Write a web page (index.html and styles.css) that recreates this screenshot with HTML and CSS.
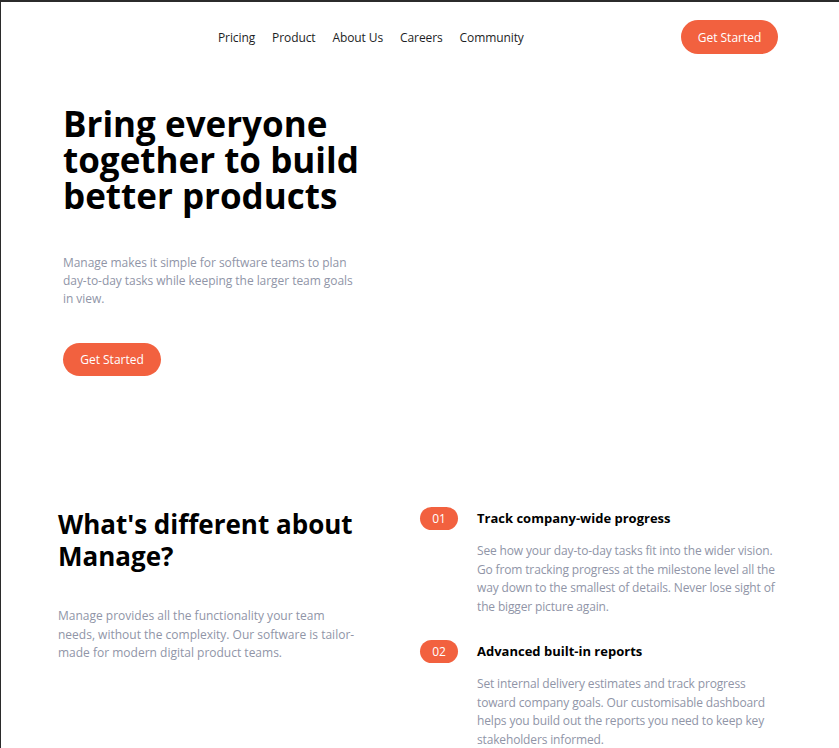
FILE: index.html
```html
<!DOCTYPE html>
<html lang="en">
<head>
<meta charset="utf-8">
<title>Manage</title>
<link rel="stylesheet" href="styles.css">
</head>
<body>
<div class="page">
  <header class="header">
    <nav class="nav">
      <a href="#">Pricing</a>
      <a href="#">Product</a>
      <a href="#">About Us</a>
      <a href="#">Careers</a>
      <a href="#">Community</a>
    </nav>
    <a class="btn btn-nav" href="#">Get Started</a>
  </header>

  <section class="hero">
    <h1>Bring everyone together to build better products</h1>
    <p class="hero-text">Manage makes it simple for software teams to plan day-to-day tasks while keeping the larger team goals in view.</p>
    <a class="btn btn-hero" href="#">Get Started</a>
  </section>

  <section class="diff">
    <div class="diff-intro">
      <h2>What's different about Manage?</h2>
      <p class="muted">Manage provides all the functionality your team needs, without the complexity. Our software is tailor-made for modern digital product teams.</p>
    </div>
    <ol class="features">
      <li class="feature">
        <span class="badge">01</span>
        <div class="feature-body">
          <h3>Track company-wide progress</h3>
          <p class="muted">See how your day-to-day tasks fit into the wider vision. Go from tracking progress at the milestone level all the way down to the smallest of details. Never lose sight of the bigger picture again.</p>
        </div>
      </li>
      <li class="feature">
        <span class="badge">02</span>
        <div class="feature-body">
          <h3>Advanced built-in reports</h3>
          <p class="muted">Set internal delivery estimates and track progress toward company goals. Our customisable dashboard helps you build out the reports you need to keep key stakeholders informed.</p>
        </div>
      </li>
    </ol>
  </section>
</div>
</body>
</html>
```

FILE: styles.css
```css
* { box-sizing: border-box; }
html, body { margin: 0; padding: 0; }
body {
  font-family: "Open Sans", "Noto Sans", sans-serif;
  font-size: 12px;
  color: #000;
  background: #fff;
  border-top: 2px solid #2b2b2b;
  border-left: 1px solid #2b2b2b;
  min-height: 748px;
  overflow: hidden;
}
.page { width: 838px; }

.header {
  display: flex;
  align-items: center;
  padding: 18px 61px 0 217px;
  height: 52px;
}
.nav {
  display: flex;
  gap: 17px;
  flex: 1;
}
.nav a {
  color: #1d1e25;
  text-decoration: none;
  font-size: 12px;
  letter-spacing: -0.1px;
}

.btn {
  display: inline-flex;
  align-items: center;
  justify-content: center;
  background: #f2613f;
  color: #fff;
  text-decoration: none;
  font-size: 12px;
  border-radius: 999px;
  height: 34px;
}
.btn-nav { width: 97px; }
.btn-hero { width: 98px; height: 33px; }

.hero {
  padding: 52px 0 0 62px;
  width: 440px;
}
.hero h1 {
  margin: 0;
  font-size: 35px;
  line-height: 36px;
  font-weight: 700;
  letter-spacing: 0;
}
.hero-text {
  margin: 40px 0 35px;
  width: 300px;
  line-height: 18px;
  color: #9095a7;
  font-size: 12px;
  letter-spacing: -0.05px;
}

.muted {
  color: #9095a7;
  font-size: 12px;
}

.diff {
  display: flex;
  padding: 132px 58px 0 57px;
}
.diff-intro { width: 362px; }
.diff-intro h2 {
  margin: 0;
  font-size: 26px;
  line-height: 32px;
  font-weight: 700;
  width: 310px;
}
.diff-intro p {
  margin: 35px 0 0;
  width: 300px;
  line-height: 18.5px;
}

.features {
  list-style: none;
  margin: -2px 0 0;
  padding: 0;
  flex: 1;
}
.feature {
  display: flex;
  gap: 19px;
  margin-bottom: 22px;
}
.badge {
  flex: none;
  width: 38px;
  height: 23px;
  border-radius: 999px;
  background: #f2613f;
  color: #fff;
  font-size: 12px;
  display: flex;
  align-items: center;
  justify-content: center;
  margin-top: 1px;
}
.feature-body h3 {
  margin: 0;
  font-size: 13px;
  line-height: 20px;
  font-weight: 700;
  padding-top: 2px;
}
.feature-body p {
  margin: 14px 0 0;
  line-height: 18.7px;
  letter-spacing: -0.15px;
}
```
